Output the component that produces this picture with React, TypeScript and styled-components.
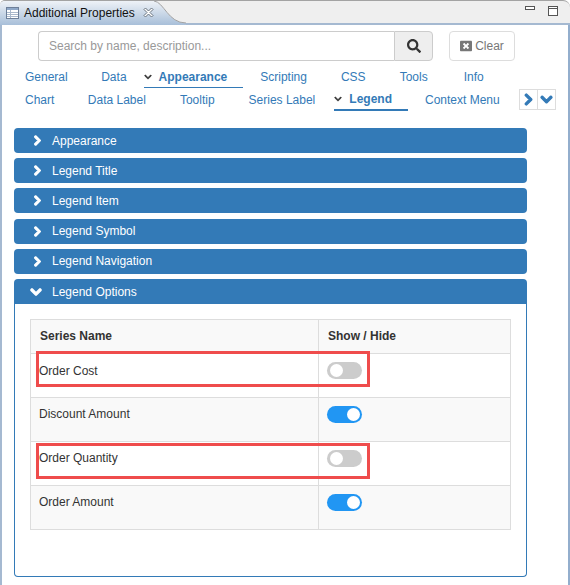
import React from 'react';
import styled, { createGlobalStyle } from 'styled-components';
import { FaChevronDown, FaChevronRight, FaSearch, FaWindowClose } from 'react-icons/fa';

const GlobalStyle = createGlobalStyle`
  html, body {
    margin: 0;
    padding: 0;
    background: #fff;
    font-family: "Liberation Sans", Arial, sans-serif;
    font-size: 12px;
    color: #333;
  }
`;

const Window = styled.div`
  width: 570px;
  height: 585px;
  overflow: hidden;
  position: relative;
  box-sizing: border-box;
`;

const TitleBar = styled.div`
  height: 25px;
  margin-right: 0.5px;
  display: flex;
  background: #efefef;
  box-sizing: border-box;
  position: relative;
  overflow: hidden;
  border-radius: 5px 7px 0 0;
  border-top: 1px solid #a3a3a3;
`;

const ActiveTab = styled.div`
  width: 186px;
  height: 24px;
  flex-shrink: 0;
  display: flex;
  align-items: center;
  padding: 0 0 1px 6px;
  box-sizing: border-box;
  gap: 5px;
  color: #111;
  font-size: 12px;
  background: linear-gradient(#eef2f7, #a8bfd9);
  clip-path: path('M0 0 H154 C164 1 168 22 186 22 V24 H0 Z');
`;

const TabCurve = styled.svg`
  position: absolute;
  left: 150px;
  top: -1px;
`;

const TabClose = styled.span`
  margin-left: 3px;
  display: flex;
`;

const TabBarFill = styled.div`
  flex: 1;
  display: flex;
  justify-content: flex-end;
  gap: 13px;
  padding: 5px 12px 0 0;
  align-self: stretch;
  border-bottom: 2px solid #a5b9d1;
`;

const Frame = styled.div`
  height: 560px;
  box-sizing: border-box;
  border-left: 2px solid #a5b9d1;
  border-right: 2px solid #93aecd;
  margin-right: 0.5px;
  padding-top: 6px;
  position: relative;
`;

const SearchRow = styled.div`
  display: flex;
  padding-left: 36px;
  height: 30px;
`;

const SearchBox = styled.div`
  width: 356px;
  box-sizing: border-box;
  border: 1px solid #ccc;
  border-right: 0;
  border-radius: 4px 0 0 4px;
  padding: 0 10px;
  display: flex;
  align-items: center;
  color: #999;
  font-size: 12px;
`;

const SearchButton = styled.div`
  width: 39px;
  box-sizing: border-box;
  border: 1px solid #ccc;
  border-radius: 0 4px 4px 0;
  background: #eeeeee;
  display: flex;
  align-items: center;
  justify-content: center;
  color: #333;
`;

const ClearButton = styled.div`
  width: 66px;
  margin-left: 16px;
  box-sizing: border-box;
  border: 1px solid #ddd;
  border-radius: 4px;
  display: flex;
  align-items: center;
  justify-content: center;
  gap: 3px;
  color: #777;
  font-size: 12px;
`;

const TabRow = styled.div<{ $first?: boolean }>`
  display: flex;
  height: 22px;
  margin-top: ${(p) => (p.$first ? '5px' : '1px')};
  padding-left: 6px;
  position: relative;
`;

const Tab = styled.div<{ $active?: boolean; $thick?: boolean; $nudge?: number }>`
  box-sizing: border-box;
  height: 22px;
  display: flex;
  align-items: center;
  color: #337ab7;
  padding: 0 17px;
  margin-left: ${(p) => p.$nudge ?? 0}px;
  white-space: nowrap;
  &:first-child {
    padding-right: 16.5px;
  }
  ${(p) =>
    p.$active &&
    `
    padding: 0 16px 0 0;
    margin-left: ${p.$thick ? 2 : 0}px;
    font-weight: bold;
    gap: 7px;
    border-bottom: ${p.$thick ? 2 : 1}px solid #337ab7;
  `}
`;

const Caret = styled.span`
  display: flex;
  color: #333;
  svg {
    stroke: currentColor;
    stroke-width: 30;
  }
`;

const ScrollButtons = styled.div`
  position: absolute;
  left: 517px;
  top: 0;
  display: flex;
  height: 21px;
  border: 1px solid #ddd;
  box-sizing: border-box;
  color: #337ab7;
`;

const ScrollButton = styled.div<{ $divider?: boolean }>`
  width: 17px;
  display: flex;
  align-items: center;
  justify-content: center;
  border-left: ${(p) => (p.$divider ? '1px solid #ddd' : '0')};
  svg {
    stroke: currentColor;
    stroke-width: 50;
  }
`;

const Accordion = styled.div`
  margin: 17px 0 0 12px;
  width: 513px;
`;

const PanelHeader = styled.div<{ $open?: boolean }>`
  height: 25px;
  margin-bottom: ${(p) => (p.$open ? '0' : '5.2px')};
  padding: ${(p) => (p.$open ? '1px 0 0 8px' : '0 0 0 8px')};
  background: #337ab7;
  color: #fff;
  border-radius: ${(p) => (p.$open ? '4px 4px 0 0' : '4px')};
  display: flex;
  align-items: center;
  box-sizing: border-box;
`;

const PanelIcon = styled.span<{ $open?: boolean }>`
  width: 30px;
  box-sizing: border-box;
  padding-right: ${(p) => (p.$open ? '3px' : '0')};
  display: flex;
  justify-content: center;
  svg {
    stroke: currentColor;
    stroke-width: 60;
  }
`;

const PanelBody = styled.div`
  height: 273px;
  box-sizing: border-box;
  border: 1px solid #337ab7;
  border-top: 0;
  border-radius: 0 0 4px 4px;
  padding: 15px 15px 0 15px;
`;

const Table = styled.table`
  border-collapse: collapse;
  width: 481px;
  table-layout: fixed;
`;

const Th = styled.th`
  border: 1px solid #ddd;
  background: #f9f9f9;
  height: 34px;
  padding: 0 9px;
  text-align: left;
  font-size: 12px;
  color: #333;
  box-sizing: border-box;
`;

const Row = styled.tr<{ $striped?: boolean }>`
  background: ${(p) => (p.$striped ? '#f9f9f9' : '#fff')};
  &:first-child td:first-child {
    padding-top: 9px;
  }
`;

const Td = styled.td`
  border: 1px solid #ddd;
  height: 44px;
  padding: 8px;
  vertical-align: top;
  box-sizing: border-box;
  color: #333;
  line-height: 17px;
`;

const Toggle = styled.div<{ $on?: boolean }>`
  width: 35px;
  height: 17px;
  border-radius: 9px;
  background: ${(p) => (p.$on ? '#2196f3' : '#ccc')};
  position: relative;
  &::after {
    content: '';
    position: absolute;
    width: 13px;
    height: 13px;
    top: 2px;
    left: ${(p) => (p.$on ? '20px' : '3px')};
    border-radius: 50%;
    background: #fff;
  }
`;

const Highlight = styled.div<{ $top: number }>`
  position: absolute;
  left: 34px;
  top: ${(p) => p.$top}px;
  width: 334px;
  height: 36px;
  box-sizing: border-box;
  border: 3px solid #ef4c4c;
  pointer-events: none;
`;

const rows = [
  { name: 'Order Cost', on: false },
  { name: 'Discount Amount', on: true },
  { name: 'Order Quantity', on: false },
  { name: 'Order Amount', on: true },
];

const closedPanels = ['Appearance', 'Legend Title', 'Legend Item', 'Legend Symbol', 'Legend Navigation'];

export default function App() {
  return (
    <Window>
      <GlobalStyle />
      <TitleBar>
        <ActiveTab>
          <svg width="13" height="12" viewBox="0 0 13 12">
            <rect x="0.5" y="0.5" width="12" height="11" fill="#fff" stroke="#6d7f99" />
            <rect x="1" y="1" width="11" height="2" fill="#8fa8c8" />
            <path d="M1 5.5H12M1 7.5H12M1 9.5H12M4.5 3V11" stroke="#a9b8cc" />
          </svg>
          <span>Additional Properties</span>
          <TabClose>
            <svg width="11" height="11" viewBox="0 0 11 11">
              <path d="M1 2.5 2.5 1 5.5 4 8.5 1 10 2.5 7 5.5 10 8.5 8.5 10 5.5 7 2.5 10 1 8.5 4 5.5Z" fill="#fff" stroke="#66707c" strokeWidth="1" />
            </svg>
          </TabClose>
        </ActiveTab>
        <TabCurve width="36" height="25" viewBox="0 0 36 25">
          <path d="M4 1C14 2 18 23 36 23" fill="none" stroke="#a3a3a3" />
        </TabCurve>
        <TabBarFill>
          <svg width="10" height="5" viewBox="0 0 10 5">
            <rect x="0.5" y="0.5" width="9" height="3" fill="#fff" stroke="#555" />
          </svg>
          <svg width="10" height="10" viewBox="0 0 10 10">
            <rect x="0.5" y="0.5" width="9" height="9" fill="#fff" stroke="#555" />
            <path d="M0 2.5H10" stroke="#555" />
          </svg>
        </TabBarFill>
      </TitleBar>
      <Frame>
        <SearchRow>
          <SearchBox>Search by name, description...</SearchBox>
          <SearchButton>
            <FaSearch size={14} />
          </SearchButton>
          <ClearButton>
            <FaWindowClose size={12} />
            Clear
          </ClearButton>
        </SearchRow>
        <TabRow $first>
          <Tab>General</Tab>
          <Tab>Data</Tab>
          <Tab $active>
            <Caret>
              <FaChevronDown size={8} />
            </Caret>
            Appearance
          </Tab>
          <Tab>Scripting</Tab>
          <Tab>CSS</Tab>
          <Tab>Tools</Tab>
          <Tab $nudge={2}>Info</Tab>
        </TabRow>
        <TabRow>
          <Tab>Chart</Tab>
          <Tab>Data Label</Tab>
          <Tab>Tooltip</Tab>
          <Tab>Series Label</Tab>
          <Tab $active $thick>
            <Caret>
              <FaChevronDown size={8} />
            </Caret>
            Legend
          </Tab>
          <Tab>Context Menu</Tab>
          <ScrollButtons>
            <ScrollButton>
              <FaChevronRight size={13} />
            </ScrollButton>
            <ScrollButton $divider>
              <FaChevronDown size={13} />
            </ScrollButton>
          </ScrollButtons>
        </TabRow>
        <Accordion>
          {closedPanels.map((title) => (
            <PanelHeader key={title}>
              <PanelIcon>
                <FaChevronRight size={11} />
              </PanelIcon>
              <span>{title}</span>
            </PanelHeader>
          ))}
          <PanelHeader $open>
            <PanelIcon $open>
              <FaChevronDown size={12} />
            </PanelIcon>
            <span>Legend Options</span>
          </PanelHeader>
          <PanelBody>
            <Table>
              <colgroup>
                <col width="288" />
                <col />
              </colgroup>
              <thead>
                <tr>
                  <Th>Series Name</Th>
                  <Th>Show / Hide</Th>
                </tr>
              </thead>
              <tbody>
                {rows.map((row, i) => (
                  <Row key={row.name} $striped={i % 2 === 1}>
                    <Td>{row.name}</Td>
                    <Td>
                      <Toggle $on={row.on} />
                    </Td>
                  </Row>
                ))}
              </tbody>
            </Table>
          </PanelBody>
        </Accordion>
        <Highlight $top={326} />
        <Highlight $top={418} />
      </Frame>
    </Window>
  );
}
